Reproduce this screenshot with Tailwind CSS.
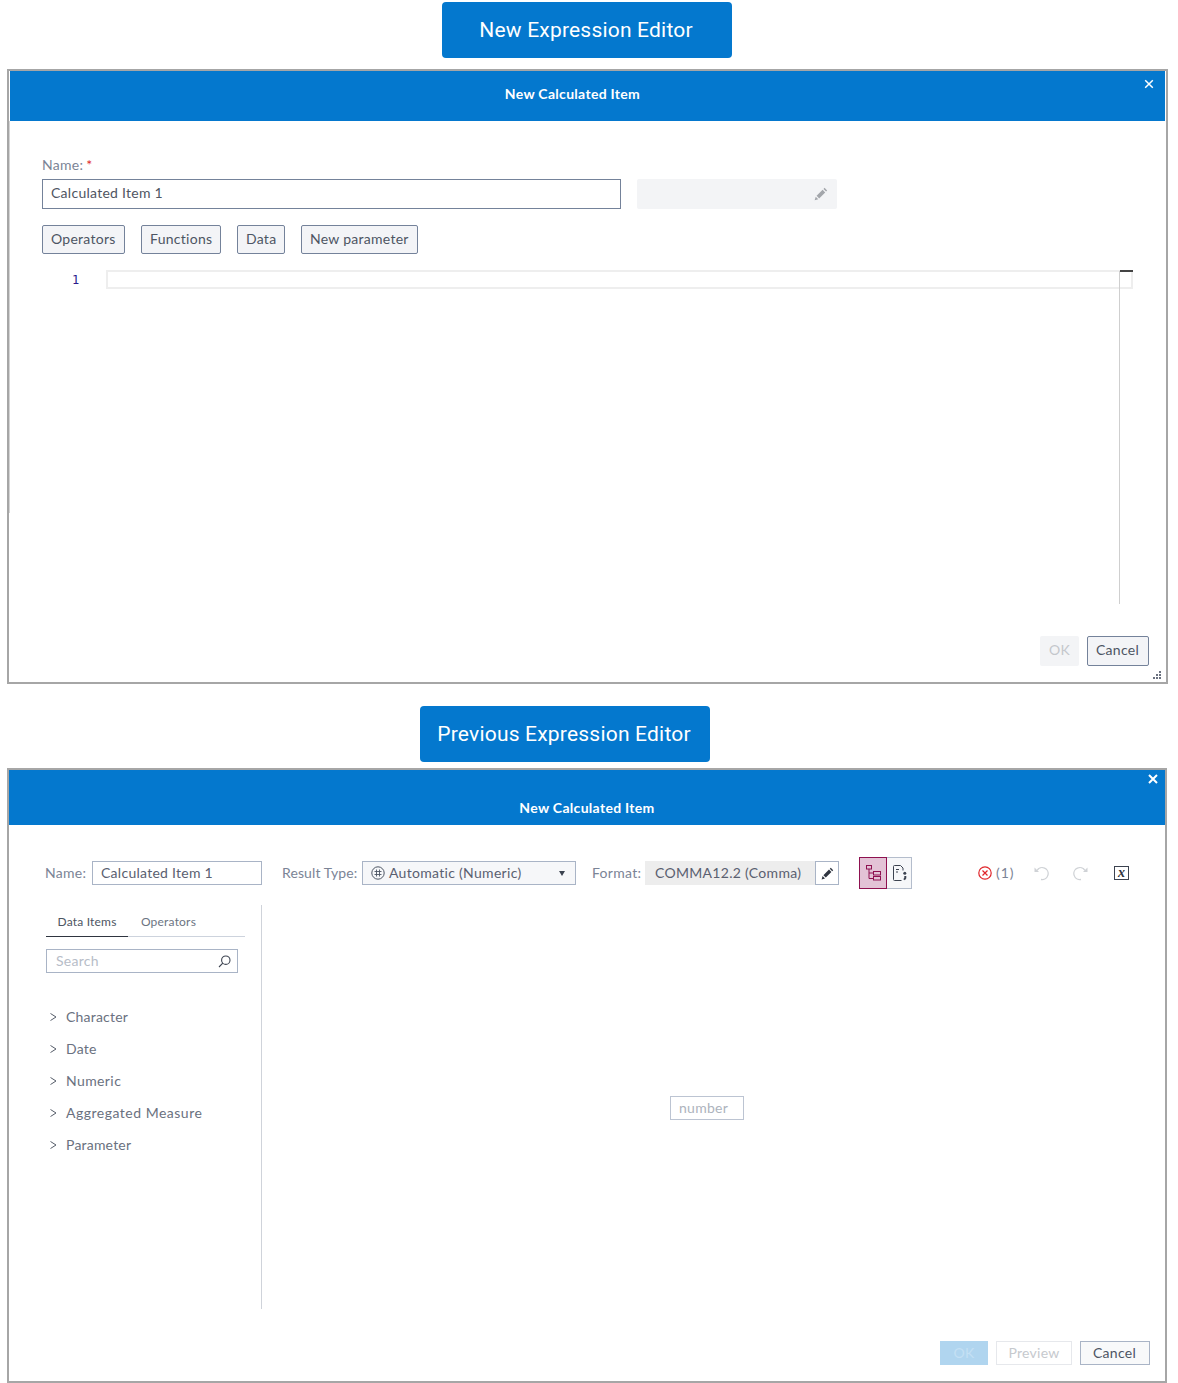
<!DOCTYPE html>
<html><head><meta charset="utf-8"><script src="https://cdn.jsdelivr.net/npm/@tailwindcss/browser@4"></script></head>
<body class="bg-white font-['Lato',sans-serif] text-[14px] tracking-[.27px] text-[#4d5563] overflow-hidden">
<div class="w-[1178px] h-[1383px] pt-[2px] overflow-hidden">
  <!-- first banner -->
  <div class="ml-[442px] w-[290px] h-[56px] rounded-[4px] bg-[#0478ce] text-white font-['Roboto',sans-serif] text-[21px] tracking-[.2px] flex items-center justify-center pr-[2px] pt-[2px]">New Expression Editor</div>

  <!-- new editor dialog -->
  <div class="relative ml-[7px] mt-[11px] w-[1161px] h-[615px] border-2 border-[#a6a6a6] flex flex-col">
    <div class="relative h-[50px] shrink-0 ml-[1px] mr-[1px] bg-[#0478ce] text-white flex items-center justify-center pr-[30px] text-[14px] tracking-[.3px] font-bold pb-[5px]">
      New Calculated Item
      <svg class="absolute right-[11px] top-[8px] w-[10px] h-[10px]" viewBox="0 0 10 10"><path d="M1.2 1.2 8.8 8.8M8.8 1.2 1.2 8.8" stroke="#fff" stroke-width="1.5"/></svg>
    </div>
    <div class="absolute left-0 top-[50px] w-[1px] h-[392px] bg-[#d4d4d4]"></div>
    <div class="flex-1 flex flex-col pl-[33px] pr-[17px] pt-[36px] relative">
      <div class="h-[16px] leading-[16px] text-[#7b8496] flex">Name:<span class="text-[#e02a2a] ml-[3px]">*</span></div>
      <div class="flex gap-[16px] mt-[6px]">
        <div class="w-[579px] h-[30px] border border-[#74829a] flex items-center pl-[8px] pb-[3px] text-[#4f5562]">Calculated Item 1</div>
        <div class="w-[200px] h-[30px] bg-[#f3f4f6] rounded-[2px] flex items-center justify-end pr-[9px]">
          <svg class="w-[14px] h-[14px]" viewBox="0 0 13 13"><path d="M.6 12.4 1.6 9l2.4 2.4zM2.4 8.2 8 2.6l2.4 2.4-5.6 5.6zM8.8 1.8l1-1 2.4 2.4-1 1z" fill="#a3a6ab"/></svg>
        </div>
      </div>
      <div class="flex gap-[16px] mt-[16px]">
        <div class="h-[29px] pl-[8px] pb-[2px] rounded-[2px] border border-[#74829a] bg-[#f3f4f7] flex items-center w-[83px]">Operators</div>
        <div class="h-[29px] pl-[8px] pb-[2px] rounded-[2px] border border-[#74829a] bg-[#f3f4f7] flex items-center w-[80px]">Functions</div>
        <div class="h-[29px] pl-[8px] pb-[2px] rounded-[2px] border border-[#74829a] bg-[#f3f4f7] flex items-center w-[48px]">Data</div>
        <div class="h-[29px] pl-[8px] pb-[2px] rounded-[2px] border border-[#74829a] bg-[#f3f4f7] flex items-center w-[117px]">New parameter</div>
      </div>
      <div class="relative flex mt-[16px] h-[334px]">
        <div class="w-[64px] h-[19px] pl-[30px] pt-[2px] font-['DejaVu_Sans_Mono',monospace] text-[12px] tracking-normal leading-[17px] text-[#2b1a8c]">1</div>
        <div class="w-[1027px] h-[19px] border-2 border-[#eeeeee]"></div>
        <div class="absolute left-[1077px] top-[1px] w-[1px] h-[333px] bg-[#cfcfcf]"></div>
        <div class="absolute left-[1078px] top-0 w-[13px] h-[2px] bg-[#444]"></div>
      </div>
      <div class="flex justify-end gap-[8px] mt-[32px]">
        <div class="w-[39px] h-[30px] pb-[3px] rounded-[2px] bg-[#f3f4f6] text-[#c4c7cc] flex items-center justify-center">OK</div>
        <div class="w-[62px] h-[30px] pb-[3px] pr-[1px] rounded-[2px] border border-[#74829a] bg-[#f3f4f7] flex items-center justify-center">Cancel</div>
      </div>
      <svg class="absolute right-[4px] bottom-[2px] w-[9px] h-[9px]" viewBox="0 0 9 9" fill="#6b7280"><rect x="6" y="0" width="2" height="2"/><rect x="3" y="3" width="2" height="2"/><rect x="6" y="3" width="2" height="2"/><rect x="0" y="6" width="2" height="2"/><rect x="3" y="6" width="2" height="2"/><rect x="6" y="6" width="2" height="2"/></svg>
    </div>
  </div>

  <!-- second banner -->
  <div class="ml-[420px] mt-[22px] w-[290px] h-[56px] rounded-[4px] bg-[#0478ce] text-white font-['Roboto',sans-serif] text-[21px] tracking-[.2px] flex items-center justify-center pt-[2px] pr-[2px]">Previous Expression Editor</div>

  <!-- previous editor dialog -->
  <div class="ml-[7px] mt-[6px] w-[1160px] h-[615px] border-2 border-[#a6a6a6] flex flex-col">
    <div class="relative h-[55px] shrink-0 bg-[#0478ce] text-white flex items-end justify-center pb-[7px] text-[14px] tracking-[.3px] font-bold">
      New Calculated Item
      <svg class="absolute right-[7px] top-[4px] w-[10px] h-[10px]" viewBox="0 0 10 10"><path d="M1 1 9 9M9 1 1 9" stroke="#fff" stroke-width="2"/></svg>
    </div>
    <div class="flex-1 flex flex-col">
      <!-- toolbar -->
      <div class="flex items-center h-[32px] mt-[32px] pl-[36px] text-[#7b8496]">
        <span class="w-[47px] pb-[1px]">Name:</span>
        <div class="w-[170px] h-[24px] border border-[#a9b4c6] flex items-center pl-[8px] pb-[2px] text-[#5a6070]">Calculated Item 1</div>
        <span class="ml-[20px] w-[80px] pb-[1px] tracking-[.1px]">Result Type:</span>
        <div class="w-[214px] h-[24px] border border-[#a9b4c6] bg-[#f6f7f9] flex items-center pl-[8px] pr-[10px] text-[#5a6070]">
          <svg class="w-[14px] h-[14px] mr-[4px]" viewBox="0 0 14 14" fill="none" stroke="#4d5563"><circle cx="7" cy="7" r="6.2"/><path d="M5.5 3.5v7M8.5 3.5v7M3.5 5.5h7M3.5 8.5h7" stroke-width=".9"/></svg>
          <span class="flex-1 pb-[2px] tracking-[.3px]">Automatic (Numeric)</span>
          <svg class="w-[6px] h-[5px]" viewBox="0 0 6 5"><path d="M0 0h6L3 5z" fill="#3c4350"/></svg>
        </div>
        <span class="ml-[16px] w-[53px] pb-[1px] tracking-[.3px]">Format:</span>
        <div class="w-[170px] h-[24px] bg-[#ededed] flex items-center pl-[10px] pb-[2px] tracking-[.3px] text-[#5a6070]">COMMA12.2 (Comma)</div>
        <div class="w-[24px] h-[24px] border border-[#a9b4c6] flex items-center justify-center">
          <svg class="w-[13px] h-[13px]" viewBox="0 0 13 13"><path d="M.6 12.4 1.6 9l2.4 2.4zM2.4 8.2 8 2.6l2.4 2.4-5.6 5.6zM8.8 1.8l1-1 2.4 2.4-1 1z" fill="#2f3540"/></svg>
        </div>
        <div class="ml-[20px] w-[28px] h-[32px] border border-[#8e1150] bg-[#e3c3d6] flex items-center justify-center">
          <svg class="w-[15px] h-[16px]" viewBox="0 0 15 16" fill="none" stroke="#8e1150"><rect x=".5" y=".5" width="5" height="3.5"/><rect x="7.5" y="6.5" width="7" height="3.5"/><rect x="7.5" y="11.5" width="7" height="3.5"/><path d="M3 4v9.5h4.5M3 8h4.5"/></svg>
        </div>
        <div class="w-[25px] h-[32px] border border-l-0 border-[#b4bdcc] bg-[#f6f7f9] flex items-center justify-center">
          <svg class="w-[14px] h-[16px] ml-[1px]" viewBox="0 0 14 16" fill="none" stroke="#3c4350"><path d="M8.5 15.5H1.5a1 1 0 0 1-1-1V1.5a1 1 0 0 1 1-1h6l2.5 2.5v2.5M3 4.5h3M3 7h2"/><circle cx="11.8" cy="8.2" r="1.5" fill="#3c4350" stroke="none"/><path d="M12.3 11v2l-1.2 1.8" stroke-width="2"/></svg>
        </div>
        <svg class="ml-[66px] w-[14px] h-[14px]" viewBox="0 0 14 14" fill="none" stroke="#e0262b"><circle cx="7" cy="7" r="6.2" stroke-width="1.2"/><path d="M4.5 4.5l5 5M9.5 4.5l-5 5" stroke-width="1.2"/></svg>
        <span class="ml-[4px] w-[20px] tracking-[.9px] pb-[1px]">(1)</span>
        <svg class="ml-[17px] w-[16px] h-[15px]" viewBox="0 0 16 15" fill="none" stroke="#cfd2d6" stroke-width="1.3"><path d="M4 4.5A6 6 0 1 1 8 13.5"/><path d="M1.5 1.5v4.5h4.5z" fill="#cfd2d6" stroke="none"/></svg>
        <svg class="ml-[24px] w-[16px] h-[15px]" viewBox="0 0 16 15" fill="none" stroke="#cfd2d6" stroke-width="1.3"><path d="M12 4.5A6 6 0 1 0 8 13.5"/><path d="M14.5 1.5v4.5h-4.5z" fill="#cfd2d6" stroke="none"/></svg>
        <div class="ml-[25px] w-[15px] h-[14px] border border-[#3c4350] flex items-center justify-center font-['Liberation_Serif',serif] italic font-bold text-[14px] tracking-normal leading-none text-[#2f3540] pb-[1px]">x</div>
      </div>
      <!-- body -->
      <div class="flex h-[404px] mt-[16px]">
        <div class="w-[253px] shrink-0 border-r border-[#cfd3da] pl-[37px]">
          <div class="flex w-[199px] h-[32px] border-b border-[#cdd3dd] text-[12px] tracking-[.2px] leading-[34px]">
            <div class="w-[82px] h-[32px] border-b border-[#2f3540] text-center text-[#4d5563]">Data Items</div>
            <div class="w-[81px] text-center text-[#6c7483]">Operators</div>
          </div>
          <div class="w-[192px] h-[24px] mt-[12px] border border-[#a9b4c6] flex items-center justify-between pl-[9px] pr-[6px] text-[#b7bdc8]">
            <span class="pb-[2px]">Search</span>
            <svg class="w-[13px] h-[13px]" viewBox="0 0 13 13" fill="none" stroke="#3c4350" stroke-width="1.1"><circle cx="7.8" cy="5.2" r="4.2"/><path d="M4.8 8.2 1 12"/></svg>
          </div>
          <div class="mt-[33px] flex flex-col gap-[12px] tracking-[.2px] text-[#6a7180]">
            <div class="flex items-center h-[20px] pl-[4px]"><svg class="w-[7px] h-[8px] mr-[9px] mt-[1px]" viewBox="0 0 7 8" fill="none" stroke="#555c69"><path d="M.5.5 6 4 .5 7.5"/></svg>Character</div>
            <div class="flex items-center h-[20px] pl-[4px]"><svg class="w-[7px] h-[8px] mr-[9px] mt-[1px]" viewBox="0 0 7 8" fill="none" stroke="#555c69"><path d="M.5.5 6 4 .5 7.5"/></svg>Date</div>
            <div class="flex items-center h-[20px] pl-[4px]"><svg class="w-[7px] h-[8px] mr-[9px] mt-[1px]" viewBox="0 0 7 8" fill="none" stroke="#555c69"><path d="M.5.5 6 4 .5 7.5"/></svg><span class="tracking-[.4px]">Numeric</span></div>
            <div class="flex items-center h-[20px] pl-[4px]"><svg class="w-[7px] h-[8px] mr-[9px] mt-[1px]" viewBox="0 0 7 8" fill="none" stroke="#555c69"><path d="M.5.5 6 4 .5 7.5"/></svg><span class="tracking-[.5px]">Aggregated Measure</span></div>
            <div class="flex items-center h-[20px] pl-[4px]"><svg class="w-[7px] h-[8px] mr-[9px] mt-[1px]" viewBox="0 0 7 8" fill="none" stroke="#555c69"><path d="M.5.5 6 4 .5 7.5"/></svg>Parameter</div>
          </div>
        </div>
        <div class="flex-1 pl-[408px] pt-[191px]">
          <div class="w-[74px] h-[24px] border border-[#bcc4d2] pl-[8px] pb-[1px] flex items-center text-[#adb3bd]">number</div>
        </div>
      </div>
      <!-- footer -->
      <div class="flex justify-end gap-[8px] mt-[32px] pr-[15px]">
        <div class="w-[48px] h-[24px] pb-[2px] bg-[#b0d5ef] text-[#c4e0f4] flex items-center justify-center">OK</div>
        <div class="w-[76px] h-[24px] pb-[2px] border border-[#e6e8ec] text-[#c6c9ce] flex items-center justify-center">Preview</div>
        <div class="w-[70px] h-[24px] pb-[2px] pr-[1px] border border-[#a9b4c6] bg-[#f8f9fa] flex items-center justify-center">Cancel</div>
      </div>
    </div>
  </div>
</div>
</body></html>
